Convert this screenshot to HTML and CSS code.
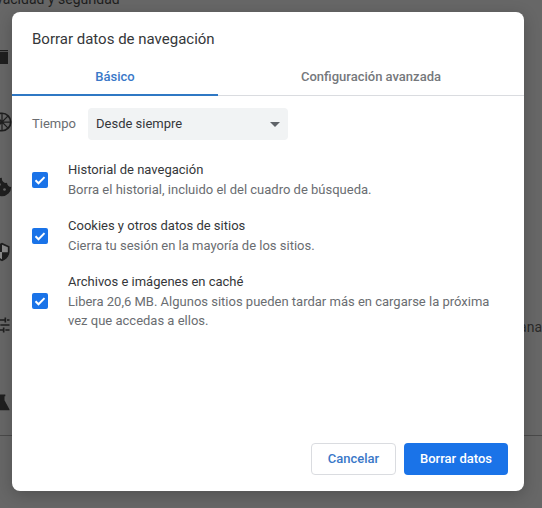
FILE: index.html
```html
<!DOCTYPE html>
<html lang="es">
<head>
<meta charset="utf-8">
<title>Borrar datos de navegación</title>
<link rel="stylesheet" href="styles.css">
</head>
<body>
<main class="page">
  <p class="page-heading">Privacidad y seguridad</p>
  <div class="page-row row-a"><svg class="bg-icon" viewBox="0 0 24 24"><path d="M0 3.600h19.200v1.500H0zM0 6h19.200v14.400H0z"/></svg></div>
  <div class="page-row row-b"><svg class="bg-icon" viewBox="0 0 24 24"><circle cx="12" cy="12" r="10.500" fill="none" stroke="#1f1f1f" stroke-width="2"/><path d="M12 2v20M2 12h20M5 5l14 14M19 5L5 19" stroke="#1f1f1f" stroke-width="1.500"/></svg></div>
  <div class="page-row row-c"><svg class="bg-icon" viewBox="0 0 24 24"><path d="M12 1a11 11 0 1 0 11 11 5 5 0 0 1-5-5 5 5 0 0 1-6-6z"/><circle cx="9" cy="9" r="1.600" fill="#666"/><circle cx="8" cy="15" r="1.600" fill="#666"/><circle cx="15" cy="15" r="1.600" fill="#666"/></svg></div>
  <div class="page-row row-d"><svg class="bg-icon" viewBox="0 0 24 24"><path d="M12 1L3 5v6c0 6 4 10 9 12 5-2 9-6 9-12V5z"/><path d="M12 3.200v9h7V6.300zM12 12H5c.6 4 3.400 7 7 8.700z" fill="#8a8a8a"/></svg></div>
  <div class="page-row row-e">
    <svg class="bg-icon" viewBox="0 0 24 24"><path d="M3 5h12v2H3zM18 5h3v2h-3zM15 3h2v6h-2zM3 11h4v2H3zM10 11h11v2H10zM7 9h2v6H7zM3 17h10v2H3zM16 17h5v2h-5zM13 15h2v6h-2z"/></svg>
    <span class="page-edge-text">ana</span>
  </div>
  <div class="page-row row-f"><svg class="bg-icon" viewBox="0 0 24 24"><path d="M8 3h8v2h-1v5l6 11v1H3v-1l6-11V5H8z"/></svg></div>
</main>

<div class="overlay">
  <section class="dialog" role="dialog" aria-label="Borrar datos de navegación">
    <h1 class="dialog-title">Borrar datos de navegación</h1>
    <nav class="tabs">
      <button class="tab tab-active">Básico</button>
      <button class="tab tab-rest">Configuración avanzada</button>
    </nav>
    <div class="dialog-body">
      <div class="time-row">
        <span class="time-label">Tiempo</span>
        <div class="select">
          <span>Desde siempre</span>
          <span class="select-arrow"></span>
        </div>
      </div>
      <div class="option">
        <span class="checkbox"><svg viewBox="0 0 16 16"><path d="M3.500 8.300l3 3 6-6.200" fill="none" stroke="#fff" stroke-width="2"/></svg></span>
        <div class="option-text">
          <div class="option-title">Historial de navegación</div>
          <div class="option-desc">Borra el historial, incluido el del cuadro de búsqueda.</div>
        </div>
      </div>
      <div class="option">
        <span class="checkbox"><svg viewBox="0 0 16 16"><path d="M3.500 8.300l3 3 6-6.200" fill="none" stroke="#fff" stroke-width="2"/></svg></span>
        <div class="option-text">
          <div class="option-title">Cookies y otros datos de sitios</div>
          <div class="option-desc">Cierra tu sesión en la mayoría de los sitios.</div>
        </div>
      </div>
      <div class="option">
        <span class="checkbox"><svg viewBox="0 0 16 16"><path d="M3.500 8.300l3 3 6-6.200" fill="none" stroke="#fff" stroke-width="2"/></svg></span>
        <div class="option-text">
          <div class="option-title">Archivos e imágenes en caché</div>
          <div class="option-desc">Libera 20,6 MB. Algunos sitios pueden tardar más en cargarse la próxima vez que accedas a ellos.</div>
        </div>
      </div>
    </div>
    <footer class="dialog-actions">
      <button class="btn btn-cancel">Cancelar</button>
      <button class="btn btn-primary">Borrar datos</button>
    </footer>
  </section>
</div>
</body>
</html>
```
FILE: styles.css
```css
* { box-sizing: border-box; }
html, body { margin: 0; height: 100%; }
body {
  position: relative;
  width: 542px;
  height: 508px;
  overflow: hidden;
  font-family: Roboto, "Liberation Sans", sans-serif;
  background: #666;
}

/* Dimmed settings page behind the dialog */
.page {
  height: 508px;
  display: flex;
  flex-direction: column;
  background: #676767;
}
.page-heading {
  margin: -9px 0 0 -21px;
  height: 21px;
  font-size: 14px;
  line-height: 16px;
  color: #1e1e1e;
  white-space: nowrap;
}
.page-row {
  display: flex;
  align-items: center;
  justify-content: space-between;
  margin-left: -8px;
}
.row-a { height: 56px; margin-top: 17px; }
.row-b { height: 74px; }
.row-c { height: 56px; }
.row-d { height: 74px; }
.row-e { height: 72px; }
.row-f { height: 75px; padding-top: 8px; border-bottom: 1px solid #4a4a4a; }
.bg-icon { width: 20px; height: 20px; fill: #1f1f1f; flex: none; }
.page-edge-text { margin-top: 4px; font-size: 14px; color: #2a2a2a; }

/* Dialog */
.overlay {
  position: absolute;
  inset: 0;
  padding: 12px 18px 17px 12px;
  display: flex;
}
.dialog {
  flex: 1;
  display: flex;
  flex-direction: column;
  background: #fff;
  border-radius: 8px;
  color: #35373a;
  box-shadow: 0 4px 16px rgba(0, 0, 0, .22);
}
.dialog-title {
  margin: 0;
  padding: 17px 20px 0;
  height: 50px;
  font-size: 15px;
  line-height: 20px;
  font-weight: 400;
}
.tabs {
  display: flex;
  height: 34px;
  border-bottom: 1px solid #dadce0;
}
.tab {
  height: 33px;
  padding: 0 0 4px;
  border: 0;
  background: none;
  font: 500 13px Roboto, "Liberation Sans", sans-serif;
  color: #75787c;
}
.tab-active {
  width: 206px;
  flex: none;
  color: #3a78c8;
  border-bottom: 2px solid #2f78c4;
  margin-bottom: -1px;
  height: 34px;
}
.tab-rest { flex: 1; }

.dialog-body {
  flex: 1;
  padding: 12px 20px 0;
  font-size: 13px;
  line-height: 19.500px;
}
.time-row {
  display: flex;
  align-items: center;
  gap: 12px;
  color: #6a6d71;
  margin-bottom: 20px;
}
.time-label { width: 44px; }
.select {
  width: 200px;
  height: 32px;
  padding: 0 8px;
  display: flex;
  align-items: center;
  justify-content: space-between;
  background: #f1f3f4;
  border-radius: 4px;
  color: #35373a;
}
.select-arrow {
  width: 0;
  height: 0;
  border-left: 5px solid transparent;
  border-right: 5px solid transparent;
  border-top: 5px solid #5f6368;
}
.option {
  display: flex;
  align-items: center;
  gap: 20px;
  margin-bottom: 17px;
}
.checkbox {
  width: 16px;
  height: 16px;
  flex: none;
  background: #1a73e8;
  border-radius: 2px;
}
.checkbox svg { display: block; width: 16px; height: 16px; }
.option-text { flex: 1; }
.option-title { color: #35373a; }
.option-desc { color: #6a6d71; }

.dialog-actions {
  display: flex;
  justify-content: flex-end;
  gap: 8px;
  padding: 0 16px 16px;
}
.btn {
  height: 32px;
  padding-bottom: 2px;
  border-radius: 4px;
  font: 500 13px Roboto, "Liberation Sans", sans-serif;
}
.btn-cancel {
  width: 85px;
  background: #fff;
  border: 1px solid #dadce0;
  color: #3a78c8;
}
.btn-primary {
  width: 104px;
  background: #1a73e8;
  border: 0;
  color: #fff;
}
```
